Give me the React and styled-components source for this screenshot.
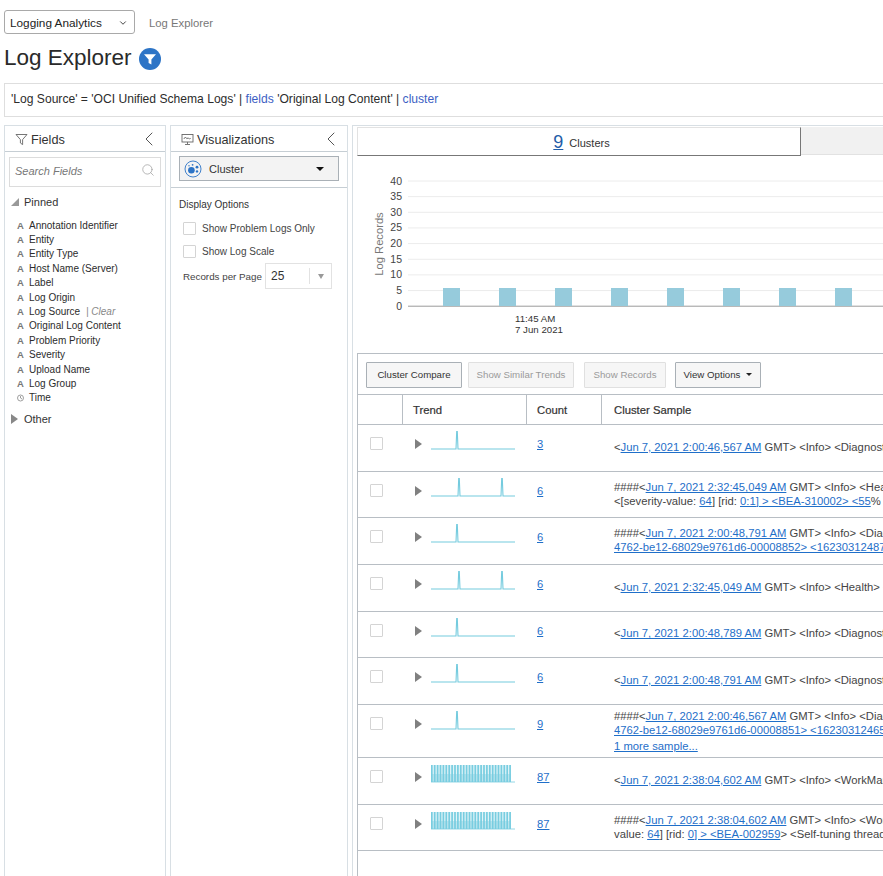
import React from 'react';
import styled, {createGlobalStyle} from 'styled-components';
import {ChevronDown, ChevronLeft, Search} from 'lucide-react';

const GlobalStyle = createGlobalStyle`
  html, body {
    margin: 0;
    padding: 0;
    background: #fff;
    overflow: hidden;
  }
  body {
    font-family: "Liberation Sans", Arial, sans-serif;
    color: #2c2c2c;
  }
  * {
    box-sizing: border-box;
  }
`;

const Page = styled.div`
  width: 883px;
  height: 876px;
  display: flex;
  flex-direction: column;
  overflow: hidden;
`;

const TopBar = styled.div`
  display: flex;
  align-items: center;
  gap: 14px;
  padding: 10px 0 0 4px;
`;

const ServiceSelect = styled.div`
  width: 131px;
  height: 24px;
  display: flex;
  align-items: center;
  justify-content: space-between;
  padding: 1px 6px 0 5px;
  border: 1px solid #a9a9a9;
  border-radius: 3px;
  font-size: 11.8px;
  color: #222;
`;

const Crumb = styled.span`
  padding-top: 1px;
  font-size: 11.3px;
  color: #777;
`;

const TitleRow = styled.div`
  display: flex;
  align-items: center;
  gap: 7px;
  height: 28px;
  margin-top: 10px;
  padding-left: 4px;
  svg {
    margin-top: 2px;
  }
`;

const Title = styled.h1`
  margin: 0;
  font-size: 22.5px;
  font-weight: normal;
  color: #2a2a2a;
`;

const QueryBar = styled.div`
  height: 34px;
  margin: 11px 0 0 4px;
  padding: 0 0 2px 6px;
  display: flex;
  align-items: center;
  border: 1px solid #dedede;
  border-right: 0;
  font-size: 12.1px;
  color: #2c2c2c;
  white-space: pre;
`;

const Keyword = styled.span`
  color: #3d5fc4;
`;

const Panels = styled.div`
  flex: 1;
  min-height: 0;
  display: flex;
  gap: 4px;
  margin: 8px 0 0 4px;
`;

const SidePanel = styled.section`
  flex: none;
  width: ${(p) => p.$width}px;
  border: 1px solid #d8dfe4;
  border-bottom: 0;
`;

const PanelHeader = styled.header`
  height: 26px;
  display: flex;
  align-items: center;
  gap: 3px;
  padding: 2px 4px 0 10px;
  border-bottom: 1px solid #c6ced4;
  font-size: 12.7px;
  color: #333;
  svg:first-child {
    margin-top: -1px;
  }
  svg:last-child {
    margin: -2px 0 0 auto;
    color: #555;
  }
`;

const SearchBox = styled.div`
  height: 30px;
  margin: 5px 4px 0 4px;
  display: flex;
  align-items: flex-start;
  justify-content: space-between;
  padding: 7px 5px 0 5px;
  border: 1px solid #dcdcdc;
  font-size: 11px;
  font-style: italic;
  color: #777;
  svg {
    margin-top: -2px;
    color: #999;
  }
`;

const GroupLabel = styled.div`
  display: flex;
  align-items: center;
  gap: ${(p) => p.$gap}px;
  margin: ${(p) => p.$top}px 0 0 6px;
  height: 16px;
  font-size: 11px;
  color: #333;
`;

const Caret = styled.span`
  width: 0;
  height: 0;
  border-style: solid;
  border-width: ${(p) => (p.$open ? '0 0 8px 8px' : '5px 0 5px 7px')};
  border-color: ${(p) => (p.$open ? 'transparent transparent #999 transparent' : 'transparent transparent transparent #888')};
`;

const FieldList = styled.ul`
  list-style: none;
  margin: 8px 0 0;
  padding: 0 0 0 12px;
`;

const FieldRow = styled.li`
  height: 14.4px;
  display: flex;
  align-items: center;
  font-size: 10px;
  color: #2c2c2c;
  white-space: pre;
`;

const TypeMark = styled.span`
  width: 12px;
  flex: none;
  font-size: 9.5px;
  font-weight: bold;
  color: #777;
`;

const ClockWrap = styled.span`
  width: 12px;
  flex: none;
  display: flex;
  align-items: center;
`;

const ClearLink = styled.em`
  color: #888;
  margin-left: 3px;
`;

const VizSelectWrap = styled.div`
  height: 36px;
  padding: 4px 8px 0;
  border-bottom: 1px solid #c6ced4;
`;

const VizSelect = styled.div`
  height: 25px;
  display: flex;
  align-items: center;
  gap: 7px;
  padding: 0 14px 0 4px;
  background: #f3f3f3;
  border: 1px solid #a9b0b6;
  font-size: 11px;
  color: #333;
`;

const SelectArrow = styled.span`
  margin-left: auto;
  width: 0;
  height: 0;
  border-style: solid;
  border-width: 4px 4px 0;
  border-color: #111 transparent transparent;
`;

const OptionsTitle = styled.div`
  margin: 11px 0 7px 8px;
  font-size: 10px;
  color: #333;
`;

const CheckRow = styled.label`
  height: 23px;
  display: flex;
  align-items: center;
  gap: 6px;
  padding-left: 12px;
  font-size: 10px;
  color: #444;
`;

const Check = styled.span`
  display: block;
  width: 13px;
  height: 13px;
  flex: none;
  background: #fff;
  border: 1px solid #d4d4d4;
  border-radius: 1px;
`;

const RecordsRow = styled.div`
  display: flex;
  align-items: center;
  justify-content: space-between;
  width: 161px;
  padding-left: 12px;
  font-size: 9.8px;
  color: #444;
`;

const RecordsInput = styled.div`
  width: 67px;
  height: 26px;
  display: flex;
  align-items: center;
  padding-left: 5px;
  border: 1px solid #e2e2e2;
  font-size: 12px;
  color: #333;
`;

const RecordsValue = styled.span`
  flex: 1;
`;

const RecordsArrow = styled.span`
  width: 22px;
  height: 16px;
  display: flex;
  align-items: center;
  justify-content: center;
  border-left: 1px solid #e2e2e2;
  &::after {
    content: '';
    width: 0;
    height: 0;
    border-style: solid;
    border-width: 5px 3.5px 0;
    border-color: #999 transparent transparent;
  }
`;

const Main = styled.main`
  flex: 1;
  min-width: 0;
  display: flex;
  flex-direction: column;
  padding: 1px 0 0 4px;
  border: 1px solid #d8dfe4;
  border-right: 0;
  border-bottom: 0;
`;

const Tabs = styled.div`
  display: flex;
  flex: none;
  height: 29px;
`;

const ActiveTab = styled.div`
  width: 444px;
  display: flex;
  align-items: center;
  justify-content: center;
  gap: 6px;
  padding: 3px 0 0 5px;
  border: 1px solid #e2e2e2;
  border-right: 1px solid #777;
  border-bottom: 1px solid #777;
  font-size: 11px;
  color: #333;
`;

const TabCount = styled.a`
  margin-top: -2px;
  font-size: 18px;
  color: #1f5da8;
  text-decoration: underline;
`;

const IdleTab = styled.div`
  flex: 1;
  height: 28px;
  background: #f1f1f1;
  border-bottom: 1px solid #e2e2e2;
`;

const ChartSvg = styled.svg`
  display: block;
  flex: none;
  font-family: "Liberation Sans", Arial, sans-serif;
`;

const TableArea = styled.div`
  flex: 1;
  border-left: 1px solid #b8bec4;
  border-top: 1px solid #b8bec4;
`;

const Toolbar = styled.div`
  height: 40px;
  display: flex;
  align-items: center;
  padding: 1px 0 0 8px;
`;

const ToolButton = styled.button`
  width: ${(p) => p.$width}px;
  height: 26px;
  margin-right: ${(p) => p.$gap}px;
  display: inline-flex;
  align-items: center;
  justify-content: center;
  gap: 6px;
  padding: 0;
  font-family: inherit;
  font-size: 9.7px;
  color: ${(p) => (p.disabled ? '#9a9a9a' : '#333')};
  background: #f6f6f6;
  border: 1px solid ${(p) => (p.disabled ? '#e0e0e0' : '#a9b0b6')};
  border-radius: 1px;
`;

const TinyArrow = styled.span`
  width: 0;
  height: 0;
  border-style: solid;
  border-width: 3.5px 3px 0;
  border-color: #222 transparent transparent;
`;

const Grid = styled.div`
  display: grid;
  grid-template-columns: 44px 124px 75px 1fr;
  border-top: 1px solid #b8bec4;
`;

const HeadRow = styled(Grid)`
  height: 30px;
  font-size: 11.3px;
  color: #333;
`;

const HeadCell = styled.div`
  display: flex;
  align-items: center;
  padding-left: 10px;
  -webkit-text-stroke: 0.2px #333;
  & + & {
    border-left: 1px solid #b8bec4;
  }
  &:last-child {
    padding-left: 12px;
  }
`;

const Row = styled(Grid)`
  height: ${(p) => p.$height}px;
  &:last-child {
    height: ${(p) => p.$height + 1}px;
    border-bottom: 1px solid #b8bec4;
  }
`;

const CheckCell = styled.div`
  padding: 12px 0 0 12px;
`;

const TrendCell = styled.div`
  display: flex;
  align-items: flex-start;
  gap: 9px;
  padding: 6px 0 0 13px;
`;

const Expand = styled.span`
  width: 0;
  height: 0;
  flex: none;
  margin-top: 8px;
  border-style: solid;
  border-width: 5px 0 5px 7px;
  border-color: transparent transparent transparent #808080;
`;

const CountCell = styled.div`
  padding: 13px 0 0 11px;
  font-size: 11.2px;
`;

const SampleCell = styled.div`
  display: flex;
  flex-direction: column;
  justify-content: ${(p) => (p.$top ? 'flex-start' : 'center')};
  padding: ${(p) => p.$top || 0}px 0 ${(p) => (p.$top ? 0 : 1)}px 13px;
  font-size: 11.25px;
  line-height: 13.5px;
  white-space: pre;
  overflow: hidden;
  color: #444;
`;

const Link = styled.a`
  color: #1f6fc9;
  text-decoration: underline;
`;

const MoreLink = styled(Link)`
  margin-top: 2.5px;
  display: block;
`;

const FilterBadge = () => (
    <svg width="22" height="22" viewBox="0 0 22 22">
        <circle cx="11" cy="11" r="11" fill="#2d74c6"/>
        <path d="M5 6.2h12l-4.6 5.2v5.2l-2.8-1.6v-3.6z" fill="#fff"/>
    </svg>
);

const FunnelIcon = () => (
    <svg width="13" height="13" viewBox="0 0 13 13" fill="none" stroke="#666" strokeWidth="0.9">
        <path d="M1 1.5h11L7.6 6.6v5L5.4 10V6.6z"/>
    </svg>
);

const MonitorIcon = () => (
    <svg width="13" height="13" viewBox="0 0 13 13" fill="none" stroke="#666" strokeWidth="0.9">
        <rect x="1" y="1.5" width="11" height="7.5"/>
        <path d="M6.5 9v2M4 11.5h5M2.8 6l1.6-2 1.5 1.8 1.3-1 1.1 1.2 1.4-.6"/>
    </svg>
);

const ClusterIcon = () => (
    <svg width="18" height="18" viewBox="0 0 18 18">
        <circle cx="9" cy="9" r="8" fill="none" stroke="#2d74c6" strokeWidth="0.9"/>
        <circle cx="7.4" cy="10.2" r="3.3" fill="#2d74c6"/>
        <circle cx="13" cy="7.2" r="1.4" fill="#2d74c6"/>
        <circle cx="13" cy="11.4" r="1.2" fill="#2d74c6"/>
        <circle cx="8.6" cy="4.8" r="0.9" fill="#2d74c6"/>
        <circle cx="5" cy="5.8" r="0.7" fill="#2d74c6"/>
    </svg>
);

const ClockMark = () => (
    <svg width="7" height="8" viewBox="0 0 7 8" fill="none" stroke="#888" strokeWidth="0.8">
        <circle cx="3.5" cy="4" r="3"/>
        <path d="M3.5 2v2l1.5 1"/>
    </svg>
);

const fields = [
    'Annotation Identifier', 'Entity', 'Entity Type', 'Host Name (Server)', 'Label', 'Log Origin',
    'Log Source', 'Original Log Content', 'Problem Priority', 'Severity', 'Upload Name', 'Log Group', 'Time',
];

const gridValues = [40, 35, 30, 25, 20, 15, 10, 5, 0];
const barLefts = [86, 142, 198, 254, 310, 366, 422, 478];

const Chart = () => (
    <ChartSvg width="526" height="197" viewBox="0 0 526 197">
        {gridValues.map((v, i) => {
            const y = 25 + i * 15.65;
            return (
                <g key={v}>
                    <line x1="51" x2="526" y1={y} y2={y} stroke={v === 0 ? '#9a9a9a' : '#ececec'}/>
                    <text x="45" y={y + 3.5} textAnchor="end" fontSize="10.5" fill="#444">{v}</text>
                </g>
            );
        })}
        {barLefts.map((x) => <rect key={x} x={x} y="132" width="17" height="18" fill="#96cbdc"/>)}
        <text transform="translate(26 88) rotate(-90)" textAnchor="middle" fontSize="11.2" fill="#777">Log Records</text>
        <text x="158" y="166" fontSize="9.7" fill="#333">11:45 AM</text>
        <text x="158" y="177" fontSize="9.7" fill="#333">7 Jun 2021</text>
    </ChartSvg>
);

// builds the little trend line, spikes are x positions on an 84 wide strip
const Sparkline = ({spikes, dense}) => {
    if (dense) {
        const columns = [];
        for (let x = 0.8; x < 81; x += 2.9) {
            columns.push(x);
        }
        return (
            <svg width="84" height="20" viewBox="0 0 84 20" fill="none" stroke="#78cde0" strokeWidth="1.7">
                <rect x="0" y="1" width="80" height="9" fill="#e2f4f8" stroke="none"/>
                <rect x="0" y="10" width="80" height="8" fill="#bde5ee" stroke="none"/>
                <path d={columns.map((x) => `M${x} 1V18`).join(' ')}/>
                <path d="M0 18H84" strokeWidth="0.8"/>
            </svg>
        );
    }
    let d = 'M0 18';
    spikes.forEach((x) => {
        d += ` L${x - 1} 18 L${x - 0.3} 0.5 L${x + 0.3} 0.5 L${x + 1} 18`;
    });
    d += ' L84 18';
    return (
        <svg width="84" height="20" viewBox="0 0 84 20" fill="none" stroke="#74cbde" strokeWidth="1.1">
            <path d={d}/>
        </svg>
    );
};

const rows = [
    {height: 47, count: '3', spikes: [26], date: 'Jun 7, 2021 2:00:46,567 AM', rest: ' GMT> <Info> <Diagnostics> <AdminServer>'},
    {
        height: 46, count: '6', spikes: [28, 71], hashes: true, top: 9, date: 'Jun 7, 2021 2:32:45,049 AM', rest: ' GMT> <Info> <Health> <AdminServer>',
        second: <>{'<[severity-value: '}<Link>64</Link>{'] [rid: '}<Link>{'0:1] > <BEA-310002> <55'}</Link>{'% of the total memory'}</>,
    },
    {
        height: 47, count: '6', spikes: [26], hashes: true, top: 9, date: 'Jun 7, 2021 2:00:48,791 AM', rest: ' GMT> <Info> <Diagnostics> <AdminServer>',
        second: <Link>{'4762-be12-68029e9761d6-00008852> <1623031248791>'}</Link>,
    },
    {height: 47, count: '6', spikes: [28, 71], date: 'Jun 7, 2021 2:32:45,049 AM', rest: ' GMT> <Info> <Health> <AdminServer>'},
    {height: 46, count: '6', spikes: [26], date: 'Jun 7, 2021 2:00:48,789 AM', rest: ' GMT> <Info> <Diagnostics> <AdminServer>'},
    {height: 47, count: '6', spikes: [26], date: 'Jun 7, 2021 2:00:48,791 AM', rest: ' GMT> <Info> <Diagnostics> <AdminServer>'},
    {
        height: 53, count: '9', spikes: [26], hashes: true, top: 5, date: 'Jun 7, 2021 2:00:46,567 AM', rest: ' GMT> <Info> <Diagnostics> <AdminServer>',
        second: <Link>{'4762-be12-68029e9761d6-00008851> <1623031246567>'}</Link>, more: true,
    },
    {height: 47, count: '87', dense: true, date: 'Jun 7, 2021 2:38:04,602 AM', rest: ' GMT> <Info> <WorkManager> <AdminServer>'},
    {
        height: 46, count: '87', dense: true, hashes: true, top: 9, date: 'Jun 7, 2021 2:38:04,602 AM', rest: ' GMT> <Info> <WorkManager> <AdminServer>',
        second: <>{'value: '}<Link>64</Link>{'] [rid: '}<Link>{'0] > <BEA-002959'}</Link>{'> <Self-tuning thread pool is'}</>,
    },
];

export default function App() {
    return (
        <Page>
            <GlobalStyle/>
            <TopBar>
                <ServiceSelect>Logging Analytics<ChevronDown size={10} strokeWidth={2}/></ServiceSelect>
                <Crumb>Log Explorer</Crumb>
            </TopBar>
            <TitleRow>
                <Title>Log Explorer</Title>
                <FilterBadge/>
            </TitleRow>
            <QueryBar>
                {"'Log Source' = 'OCI Unified Schema Logs' | "}<Keyword>fields</Keyword>{" 'Original Log Content' | "}<Keyword>cluster</Keyword>
            </QueryBar>
            <Panels>
                <SidePanel $width={162}>
                    <PanelHeader><FunnelIcon/>Fields<ChevronLeft size={24} strokeWidth={1}/></PanelHeader>
                    <SearchBox>Search Fields<Search size={14} strokeWidth={1.2}/></SearchBox>
                    <GroupLabel $top={7} $gap={5}><Caret $open/>Pinned</GroupLabel>
                    <FieldList>
                        {fields.map((name) => (
                            <FieldRow key={name}>
                                {name === 'Time' ? <ClockWrap><ClockMark/></ClockWrap> : <TypeMark>A</TypeMark>}
                                {name}
                                {name === 'Log Source' && <ClearLink>{' | Clear'}</ClearLink>}
                            </FieldRow>
                        ))}
                    </FieldList>
                    <GroupLabel $top={6} $gap={6}><Caret/>Other</GroupLabel>
                </SidePanel>
                <SidePanel $width={178}>
                    <PanelHeader><MonitorIcon/>Visualizations<ChevronLeft size={24} strokeWidth={1}/></PanelHeader>
                    <VizSelectWrap>
                        <VizSelect><ClusterIcon/>Cluster<SelectArrow/></VizSelect>
                    </VizSelectWrap>
                    <OptionsTitle>Display Options</OptionsTitle>
                    <CheckRow><Check/>Show Problem Logs Only</CheckRow>
                    <CheckRow><Check/>Show Log Scale</CheckRow>
                    <RecordsRow>
                        Records per Page
                        <RecordsInput><RecordsValue>25</RecordsValue><RecordsArrow/></RecordsInput>
                    </RecordsRow>
                </SidePanel>
                <Main>
                    <Tabs>
                        <ActiveTab><TabCount>9</TabCount>Clusters</ActiveTab>
                        <IdleTab/>
                    </Tabs>
                    <Chart/>
                    <TableArea>
                        <Toolbar>
                            <ToolButton $width={96} $gap={6}>Cluster Compare</ToolButton>
                            <ToolButton $width={106} $gap={10} disabled>Show Similar Trends</ToolButton>
                            <ToolButton $width={82} $gap={9} disabled>Show Records</ToolButton>
                            <ToolButton $width={86} $gap={0}>View Options<TinyArrow/></ToolButton>
                        </Toolbar>
                        <HeadRow>
                            <HeadCell/>
                            <HeadCell>Trend</HeadCell>
                            <HeadCell>Count</HeadCell>
                            <HeadCell>Cluster Sample</HeadCell>
                        </HeadRow>
                        {rows.map((row, i) => (
                            <Row key={i} $height={row.height}>
                                <CheckCell><Check/></CheckCell>
                                <TrendCell>
                                    <Expand/>
                                    <Sparkline spikes={row.spikes} dense={row.dense}/>
                                </TrendCell>
                                <CountCell><Link>{row.count}</Link></CountCell>
                                <SampleCell $top={row.top}>
                                    <div>{row.hashes ? '####<' : '<'}<Link>{row.date}</Link>{row.rest}</div>
                                    {row.second && <div>{row.second}</div>}
                                    {row.more && <MoreLink>1 more sample...</MoreLink>}
                                </SampleCell>
                            </Row>
                        ))}
                    </TableArea>
                </Main>
            </Panels>
        </Page>
    );
}
